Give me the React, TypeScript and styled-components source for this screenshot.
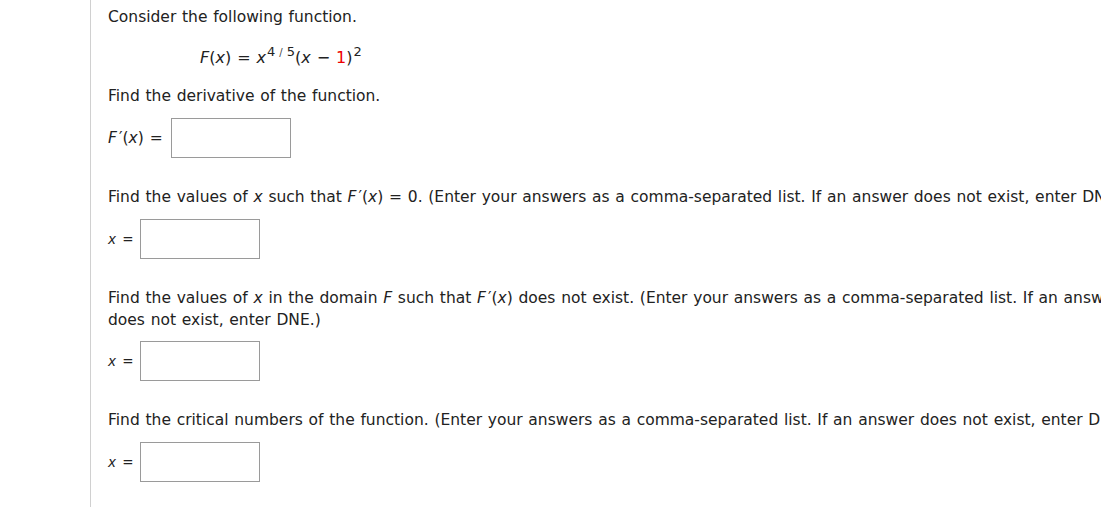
import React from "react";
import styled, { createGlobalStyle } from "styled-components";

const Global = createGlobalStyle`
  html, body { margin: 0; padding: 0; background: #fff; overflow: hidden; }
  body { font-family: "DejaVu Sans", Verdana, sans-serif; color: #222; }
`;

const Page = styled.div`
  display: flex;
  width: 1101px;
  height: 507px;
  overflow: hidden;
`;

const Gutter = styled.div`
  flex: 0 0 90px;
`;

const Content = styled.div`
  flex: 0 0 auto;
  width: 1045px;
  border-left: 1px solid #d0d0d0;
  padding: 6px 0 0 17px;
  font-size: 15.5px;
  line-height: 22px;
  word-spacing: 0.8px;
`;

const Para = styled.p<{ $mt?: number }>`
  margin: ${(p) => p.$mt ?? 0}px 0 0 0;
`;

const Formula = styled.div`
  margin: 19px 0 0 92px;
  font-size: 16px;
  word-spacing: 0;
  white-space: nowrap;
`;

const Op = styled.span`
  margin: 0 6px;
`;

const Sup = styled.sup`
  font-size: 13px;
  line-height: 0;
  vertical-align: 7px;
  margin-left: 1px;
`;

const Slash = styled.span`
  font-size: 10px;
  margin: 0 4px;
  color: #444;
`;

const Red = styled.span`
  color: #e00;
`;

const I = styled.i``;

const Prime = styled.span`
  margin-left: 2px;
`;

const AnswerRow = styled.div<{ $mt: number; $gap?: number }>`
  display: flex;
  align-items: center;
  gap: ${(p) => p.$gap ?? 6}px;
  margin-top: ${(p) => p.$mt}px;
`;

const Label = styled.span<{ $small?: boolean }>`
  font-size: ${(p) => (p.$small ? 13.5 : 15.5)}px;
  word-spacing: ${(p) => (p.$small ? 2 : 1)}px;
`;

const Box = styled.div`
  width: 118px;
  height: 38px;
  border: 1px solid #9a9a9a;
  box-sizing: content-box;
`;

const Fp = () => (
  <>
    <I>F</I>
    <Prime>′</Prime>(<I>x</I>)
  </>
);

export default function App() {
  return (
    <>
      <Global />
      <Page>
        <Gutter />
        <Content>
          <Para>Consider the following function.</Para>
          <Formula>
            <I>F</I>(<I>x</I>)<Op>=</Op>
            <I>x</I>
            <Sup>
              4<Slash>/</Slash>5
            </Sup>
            (<I>x</I>
            <Op>−</Op>
            <Red>1</Red>)<Sup>2</Sup>
          </Formula>
          <Para $mt={16}>Find the derivative of the function.</Para>
          <AnswerRow $mt={11} $gap={8}>
            <Label>
              <Fp /> =
            </Label>
            <Box />
          </AnswerRow>
          <Para $mt={28}>
            Find the values of <I>x</I> such that <Fp /> = 0. (Enter your answers as a comma-separated list. If an answer does not exist, enter DNE.)
          </Para>
          <AnswerRow $mt={11}>
            <Label $small>
              <I>x</I> =
            </Label>
            <Box />
          </AnswerRow>
          <Para $mt={28}>
            Find the values of <I>x</I> in the domain <I>F</I> such that <Fp /> does not exist. (Enter your answers as a comma-separated list. If an answer does not exist, enter DNE.)
          </Para>
          <AnswerRow $mt={10}>
            <Label $small>
              <I>x</I> =
            </Label>
            <Box />
          </AnswerRow>
          <Para $mt={28}>
            Find the critical numbers of the function. (Enter your answers as a comma-separated list. If an answer does not exist, enter DNE.)
          </Para>
          <AnswerRow $mt={11}>
            <Label $small>
              <I>x</I> =
            </Label>
            <Box />
          </AnswerRow>
        </Content>
      </Page>
    </>
  );
}
